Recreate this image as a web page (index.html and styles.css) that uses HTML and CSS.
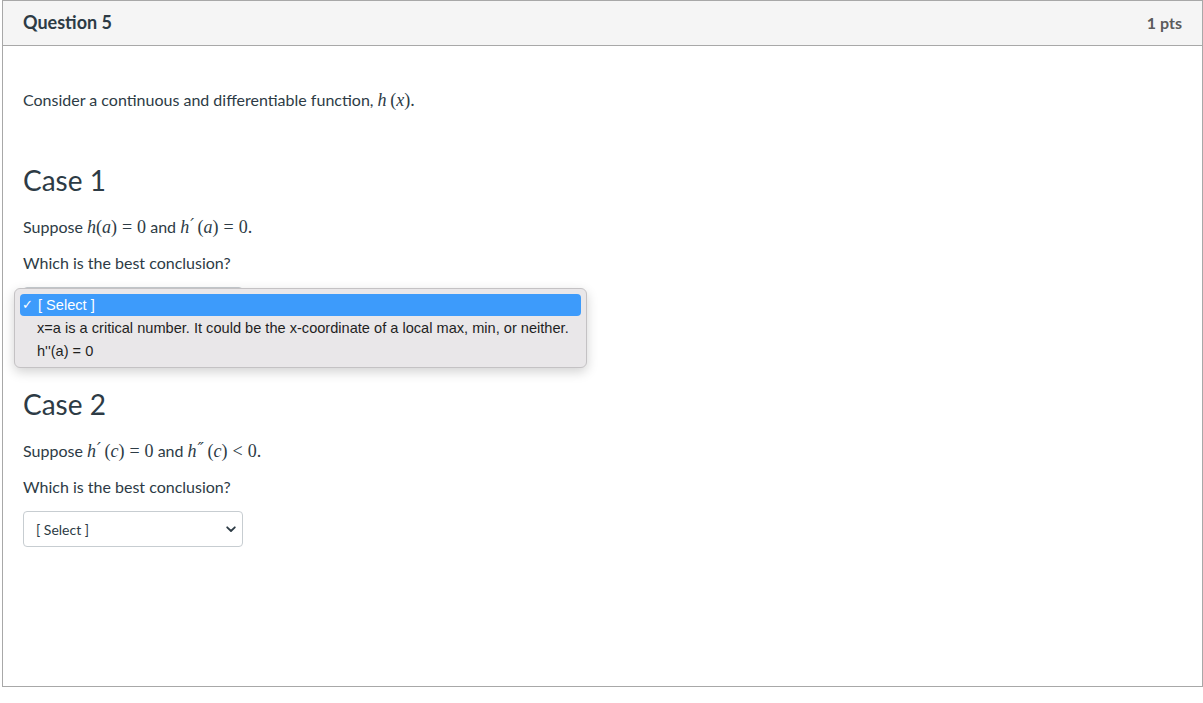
FILE: index.html
```html
<!DOCTYPE html>
<html>
<head>
<meta charset="utf-8">
<link rel="stylesheet" href="styles.css">
</head>
<body>
<div class="question">
  <div class="q-header">
    <span class="q-title">Question 5</span>
    <span class="q-pts">1 pts</span>
  </div>
  <div class="q-body">
    <p class="intro">Consider a continuous and differentiable function, <span class="m"><i>h</i>&#8201;(<i>x</i>).</span></p>
    <h2 class="case first">Case 1</h2>
    <p>Suppose <span class="m"><i>h</i>(<i>a</i>)<span class="op">=</span>0</span> and <span class="m"><i>h</i><span class="pr">&#8242;</span>&#8201;(<i>a</i>)<span class="op">=</span>0.</span></p>
    <p>Which is the best conclusion?</p>
    <div class="select-wrap">
      <div class="select">
        <span>[ Select ]</span>
        <svg class="chev" width="10" height="7" viewBox="0 0 10 7"><path d="M1.2 1.3 L5 5 L8.8 1.3" fill="none" stroke="#2d3b45" stroke-width="1.8" stroke-linecap="round" stroke-linejoin="round"/></svg>
      </div>
      <div class="popup">
        <div class="opt sel"><span class="check">&#10003;</span><span>[ Select ]</span></div>
        <div class="opt">x=a is a critical number. It could be the x-coordinate of a local max, min, or neither.</div>
        <div class="opt">h''(a) = 0</div>
      </div>
    </div>
    <h2 class="case second">Case 2</h2>
    <p>Suppose <span class="m"><i>h</i><span class="pr">&#8242;</span>&#8201;(<i>c</i>)<span class="op">=</span>0</span> and <span class="m"><i>h</i><span class="pr">&#8243;</span>&#8201;(<i>c</i>)<span class="op">&lt;</span>0.</span></p>
    <p>Which is the best conclusion?</p>
    <div class="select-wrap">
      <div class="select">
        <span>[ Select ]</span>
        <svg class="chev" width="10" height="7" viewBox="0 0 10 7"><path d="M1.2 1.3 L5 5 L8.8 1.3" fill="none" stroke="#2d3b45" stroke-width="1.8" stroke-linecap="round" stroke-linejoin="round"/></svg>
      </div>
    </div>
  </div>
</div>
</body>
</html>
```

FILE: styles.css
```css
html, body {
  margin: 0;
  padding: 0;
  background: #fff;
}
body {
  padding: 0 0 0 2px;
  font-family: Lato, "Liberation Sans", sans-serif;
  color: #2d3b45;
}
.question {
  width: 1201px;
  border: 1px solid #a8a8a8;
  box-sizing: border-box;
}
.q-header {
  box-sizing: content-box;
  background: #f5f5f5;
  border-bottom: 1px solid #a8a8a8;
  display: flex;
  align-items: baseline;
  justify-content: space-between;
  padding: 11px 20px 0 20px;
  height: 33px;
}
.q-title {
  font-weight: 700;
  font-size: 18px;
  line-height: 20px;
  color: #2d3b45;
}
.q-pts {
  font-weight: 700;
  font-size: 16px;
  line-height: 20px;
  color: #5b5b5b;
}
.q-body {
  padding: 42px 20px 0 20px;
  height: 640px;
  box-sizing: border-box;
}
p {
  margin: 0 0 12px 0;
  font-size: 16px;
  line-height: 24px;
}
.intro {
  margin-bottom: 0;
}
.m {
  font-family: "Liberation Serif", serif;
  font-size: 18px;
  line-height: 1;
}
.m i {
  font-family: "Liberation Serif", serif;
  font-size: 18px;
  font-style: italic;
}
.m .pr {
  font-family: "DejaVu Serif", serif;
  font-size: 17px;
  font-style: italic;
  position: relative;
  top: -3px;
  margin-left: 1px;
}
.m .op {
  margin: 0 5px;
}
.case {
  font-weight: 400;
  font-size: 28px;
  line-height: 35px;
  margin: 0 0 17px 0;
}
.case.first {
  margin-top: 51px;
}
.case.second {
  margin-top: 64px;
}
.select-wrap {
  position: relative;
  width: 220px;
  margin-top: 1px;
}
.select {
  height: 36px;
  box-sizing: border-box;
  border: 1px solid #c7cdd1;
  border-radius: 4px;
  background: #fff;
  display: flex;
  align-items: center;
  justify-content: space-between;
  padding: 0 6px 0 12px;
  font-size: 14px;
  color: #2d3b45;
}
.chev {
  display: block;
}
.popup {
  position: absolute;
  left: -9px;
  top: 1px;
  width: 573px;
  height: 80px;
  box-sizing: border-box;
  background: #e9e7e9;
  border: 1px solid #c4c2c4;
  border-radius: 6px;
  box-shadow: 0 4px 12px rgba(0,0,0,0.18);
  padding: 5px 5px;
  font-family: "Liberation Sans", Arial, sans-serif;
  font-size: 14.6px;
  color: #1f1f1f;
}
.opt {
  height: 23px;
  line-height: 23px;
  padding-left: 17px;
  white-space: nowrap;
}
.opt.sel {
  display: flex;
  align-items: center;
  gap: 5px;
  background: #3d9bfb;
  color: #fff;
  border-radius: 4px;
  height: 22px;
  line-height: 22px;
  padding-left: 2px;
  margin-bottom: 1px;
}
.check {
  font-size: 13px;
}
```
